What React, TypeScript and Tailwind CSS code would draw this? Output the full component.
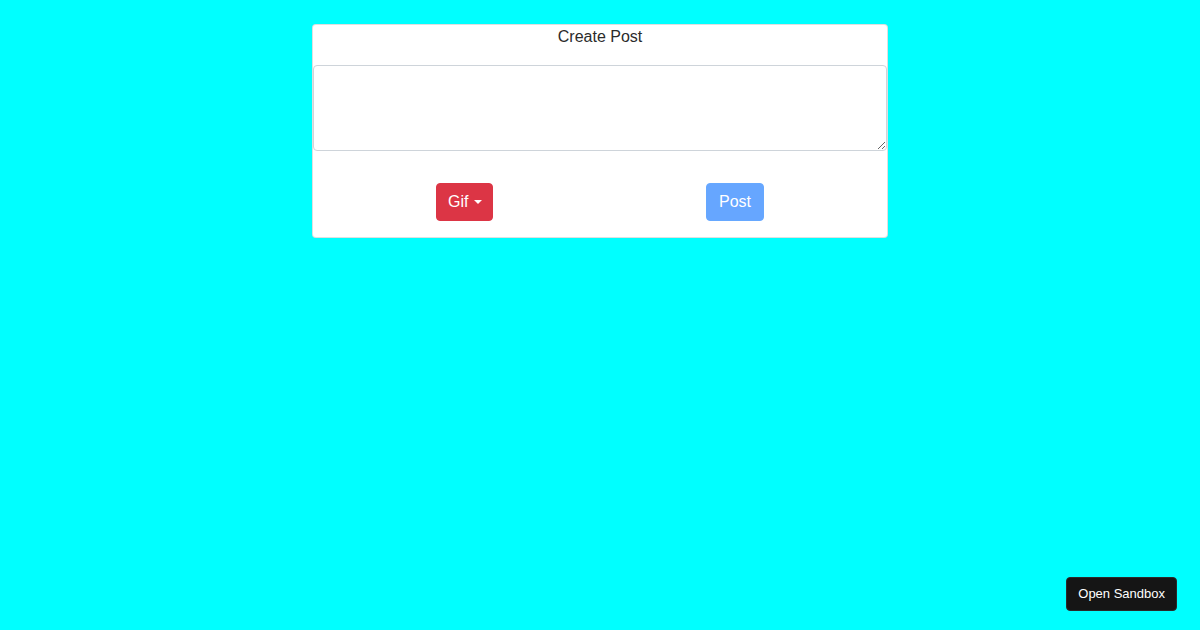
import React from 'react';

export default function App() {
  return (
    <div className="min-h-screen w-full bg-[#00ffff] font-['Liberation_Sans',Arial,sans-serif] text-[#2b2b2b]">
      <div className="flex justify-center pt-[24px]">
        <div className="w-[576px] rounded-[4px] border border-black/[0.125] bg-white pb-[16px]">
          {/* Title */}
          <div className="text-center text-[16px] leading-[24px]">Create Post</div>

          {/* Textarea */}
          <textarea
            className="mt-[16px] block h-[86px] w-full resize-y rounded-[4px] border border-[#ced4da] px-3 py-1.5 text-[16px] outline-none"
            defaultValue=""
          />

          {/* Actions */}
          <div className="mt-[32px] flex items-center justify-between px-[123px]">
            <button className="flex h-[38px] items-center rounded-[4px] border border-[#dc3545] bg-[#dc3545] pl-[11px] pr-[10px] text-[16px] text-white">
              Gif
              <span className="ml-[6px] inline-block h-0 w-0 border-x-[4px] border-t-[4px] border-x-transparent border-t-white" />
            </button>
            <button className="h-[38px] rounded-[4px] border border-[#66a8ff] bg-[#66a6ff] px-[12px] text-[16px] text-white">
              Post
            </button>
          </div>
        </div>
      </div>

      {/* Floating sandbox button */}
      <div className="fixed bottom-[19px] right-[23px]">
        <button className="h-[34px] rounded-[4px] border border-[#2a2a2a] bg-[#151515] px-[11px] text-[13px] text-white">
          Open Sandbox
        </button>
      </div>
    </div>
  );
}
